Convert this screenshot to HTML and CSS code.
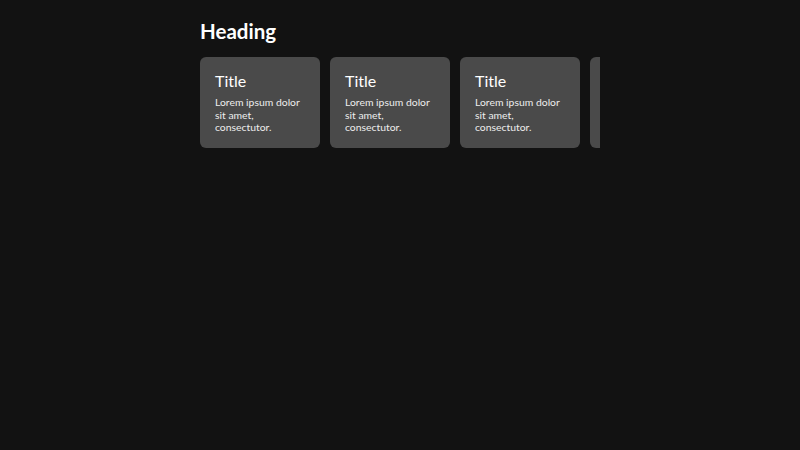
FILE: index.html
```html
<!DOCTYPE html>
<html lang="en">
<head>
<meta charset="utf-8">
<title>Heading</title>
<link rel="stylesheet" href="styles.css">
</head>
<body>
<main class="wrap">
  <h1 class="heading">Heading</h1>
  <div class="scroller">
    <div class="card"><h2 class="card-title">Title</h2><p class="card-text">Lorem ipsum dolor sit amet, consectutor.</p></div>
    <div class="card"><h2 class="card-title">Title</h2><p class="card-text">Lorem ipsum dolor sit amet, consectutor.</p></div>
    <div class="card"><h2 class="card-title">Title</h2><p class="card-text">Lorem ipsum dolor sit amet, consectutor.</p></div>
    <div class="card"><h2 class="card-title">Title</h2><p class="card-text">Lorem ipsum dolor sit amet, consectutor.</p></div>
  </div>
</main>
</body>
</html>
```
FILE: styles.css
```css
html, body {
  margin: 0;
  height: 100%;
  background: #121212;
}
body {
  font-family: Lato, "Noto Sans", sans-serif;
  color: #f2f2f2;
}
.wrap {
  width: 400px;
  margin: 0 auto;
  padding-top: 16px;
}
.heading {
  margin: 0 0 11px;
  font-size: 20.5px;
  line-height: 30px;
  font-weight: 700;
  color: #ffffff;
}
.scroller {
  display: flex;
  gap: 10px;
  overflow: hidden;
}
.card {
  flex: 0 0 120px;
  box-sizing: border-box;
  height: 91px;
  padding: 14px 15px 15px;
  background: #4a4a4a;
  border-radius: 6px;
}
.card-title {
  margin: 0 0 5px;
  font-size: 16px;
  line-height: 20px;
  font-weight: 400;
  color: #ffffff;
}
.card-text {
  margin: 0;
  font-size: 10.4px;
  line-height: 12.5px;
  color: #ededed;
}
```
